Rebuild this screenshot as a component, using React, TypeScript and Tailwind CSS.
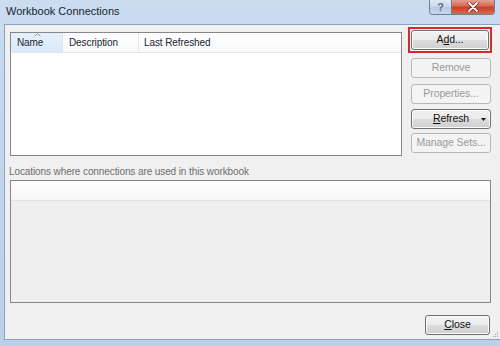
import React from "react";

const enabledBtn =
  "flex items-center justify-center h-[20px] border border-[#707070] rounded-[3px] bg-[linear-gradient(#f2f2f2,#ebebeb_50%,#dddddd_50%,#cfcfcf)] shadow-[inset_0_0_0_1px_#fbfbfb] text-[10.5px] tracking-[-0.1px] text-[#111]";
const disabledBtn =
  "flex items-center justify-center h-[20px] border border-[#b5b8bb] rounded-[3px] bg-[#f4f4f4] text-[10.5px] tracking-[-0.1px] text-[#9a9a9a]";

export default function App() {
  return (
    <div className="w-[500px] h-[346px] overflow-hidden flex flex-col bg-[linear-gradient(#c9dcf0,#b9d0e9)] font-['Liberation_Sans',Arial,sans-serif]">
      {/* Title bar */}
      <div className="h-[24px] shrink-0 flex items-start">
        <span className="pl-[6px] pt-[5px] text-[11px] leading-[13px] text-[#1b2430]">
          Workbook Connections
        </span>
        <div className="ml-auto mr-[5px] flex h-[16px] -mt-[1px] border border-[#6e7f98] border-t-0 rounded-b-[4px] overflow-hidden">
          <div className="w-[22px] h-full flex items-center justify-center bg-[linear-gradient(#e4ecf6,#c9d7e8_50%,#b7c9df_51%,#c7d6e8)] border-r border-[#6e7f98]">
            <span className="text-[11px] leading-[11px] font-bold text-[#5b6f8c] mt-[1px]">?</span>
          </div>
          <div className="w-[42px] h-full flex items-center justify-center bg-[linear-gradient(#e9a899,#d96a55_45%,#c7412b_55%,#d86a4d)]">
            <svg width="12" height="10" viewBox="0 0 12 10">
              <path d="M2 1 L10 9 M10 1 L2 9" stroke="#6b2015" strokeWidth="3.2" strokeLinecap="round" />
              <path d="M2 1 L10 9 M10 1 L2 9" stroke="#ffffff" strokeWidth="1.8" strokeLinecap="round" />
            </svg>
          </div>
        </div>
      </div>

      {/* Dialog body */}
      <div className="relative flex-1 ml-[4px] mb-[6px] border-l border-t border-b border-[#8aa2bd] bg-[#f0f0f0] flex flex-col">
        {/* top row */}
        <div className="flex items-start pt-[2px] pl-[5px]">
          {/* list box */}
          <div className="mt-[5px] w-[392px] h-[124px] border border-[#828790] bg-white flex flex-col">
            <div className="h-[20px] flex border-b border-[#e5e5e5] bg-[linear-gradient(#ffffff,#f7f8f9)] text-[10px] tracking-[-0.1px] text-[#1e2530]">
              <div className="relative w-[52px] flex items-center pl-[6px] border-r border-[#dde3ea] bg-[linear-gradient(#e6f1fc,#d9e9f9)]">
                Name
                <svg className="absolute left-[23px] top-[0px]" width="7" height="4" viewBox="0 0 7 4">
                  <path d="M0.5 3.5 L3.5 0.5 L6.5 3.5" fill="none" stroke="#8a96a6" strokeWidth="1" />
                </svg>
              </div>
              <div className="w-[76px] flex items-center pl-[6px] border-r border-[#e3e7ec]">Description</div>
              <div className="flex-1 flex items-center pl-[5px]">Last Refreshed</div>
            </div>
          </div>

          {/* buttons column */}
          <div className="ml-[6px] w-[84px] flex flex-col">
            <div className="h-[26px] border-2 border-[#d42a2e] p-[1px] pr-[1px]">
              <div className={enabledBtn + " h-[18px]"}>
                <span>
                  A<span className="underline">d</span>d...
                </span>
              </div>
            </div>
            <div className="pl-[3px] pr-[1px] flex flex-col">
              <div className={disabledBtn + " mt-[5px]"}>Remove</div>
              <div className={disabledBtn + " mt-[6px]"}>Properties...</div>
              <div className={enabledBtn + " relative mt-[5px]"}>
                <span>
                  <span className="underline">R</span>efresh
                </span>
                <svg className="absolute right-[4px] top-[8px]" width="5" height="3" viewBox="0 0 5 3">
                  <path d="M0 0 L5 0 L2.5 3 Z" fill="#111" />
                </svg>
              </div>
              <div className={disabledBtn + " mt-[4px]"}>Manage Sets...</div>
            </div>
          </div>
        </div>

        {/* label */}
        <div className="mt-[8px] pl-[4px] h-[15px] text-[10px] tracking-[-0.1px] leading-[15px] text-[#6d6d6d]">
          Locations where connections are used in this workbook
        </div>

        {/* locations box */}
        <div className="mt-[1px] ml-[5px] w-[481px] h-[123px] border border-[#828790] bg-[#efefef] flex flex-col">
          <div className="h-[20px] bg-[linear-gradient(#ffffff,#f6f6f6)] border-b border-[#e2e2e2]" />
        </div>

        {/* close */}
        <div className="mt-[12px] flex justify-end pr-[10px]">
          <div className={enabledBtn + " w-[65px]"}>
            <span>
              <span className="underline">C</span>lose
            </span>
          </div>
        </div>

        {/* resize grip */}
        <svg className="absolute right-[1px] bottom-[1px]" width="8" height="8" viewBox="0 0 8 8">
          <rect x="6" y="2" width="1" height="1" fill="#9aa4b0" />
          <rect x="4" y="4" width="1" height="1" fill="#9aa4b0" />
          <rect x="6" y="4" width="1" height="1" fill="#9aa4b0" />
          <rect x="2" y="6" width="1" height="1" fill="#9aa4b0" />
          <rect x="4" y="6" width="1" height="1" fill="#9aa4b0" />
          <rect x="6" y="6" width="1" height="1" fill="#9aa4b0" />
        </svg>
      </div>
    </div>
  );
}
